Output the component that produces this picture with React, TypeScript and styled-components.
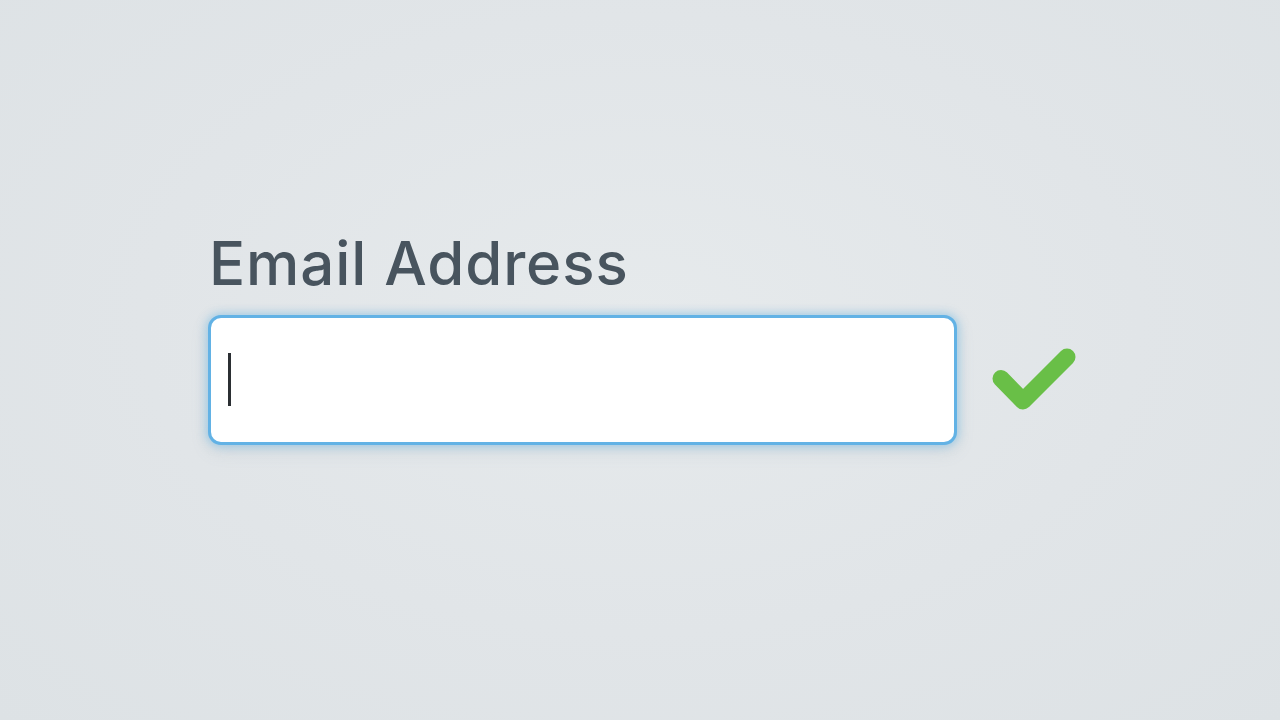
import * as React from 'react';
import styled, { createGlobalStyle } from 'styled-components';

const GlobalStyle = createGlobalStyle`
  html, body {
    margin: 0;
    padding: 0;
    height: 100%;
  }
  body {
    font-family: Inter, 'Open Sans', 'Liberation Sans', sans-serif;
    background: #e1e5e8;
  }
`;

const Page = styled.main`
  width: 1280px;
  height: 720px;
  box-sizing: border-box;
  padding: 228px 0 0 208px;
  display: flex;
  background: radial-gradient(ellipse at 50% 45%, #e6eaec 0%, #e1e5e8 55%, #dde2e5 100%);
`;

const Field = styled.div`
  display: flex;
  flex-direction: column;
  gap: 17px;
`;

const Label = styled.label`
  font-size: 60px;
  line-height: 70px;
  font-weight: 500;
  color: #48545e;
  letter-spacing: 0.9px;
  margin-left: 1px;
`;

const Row = styled.div`
  display: flex;
  align-items: center;
  gap: 24px;
`;

const InputBox = styled.div`
  width: 749px;
  height: 130px;
  box-sizing: border-box;
  background: #ffffff;
  border: 3px solid #62b2e5;
  border-radius: 13px;
  box-shadow: 0 0 9px 2px rgba(110, 185, 230, 0.5), 0 6px 18px rgba(120, 140, 160, 0.16);
  display: flex;
  align-items: center;
  padding-left: 17px;
`;

const Caret = styled.span`
  width: 3px;
  height: 53px;
  background: #2b2f33;
  margin-top: -2px;
`;

const Check = () => (
  <svg width="96" height="80" viewBox="0 0 96 80" aria-hidden>
    <path
      d="M20 38.5 L42 61 L86 17"
      fill="none"
      stroke="#69bf47"
      strokeWidth="17"
      strokeLinecap="round"
      strokeLinejoin="round"
    />
  </svg>
);

export default function App() {
  return (
    <>
      <GlobalStyle />
      <Page>
        <Field>
          <Label>Email Address</Label>
          <Row>
            <InputBox>
              <Caret />
            </InputBox>
            <Check />
          </Row>
        </Field>
      </Page>
    </>
  );
}
